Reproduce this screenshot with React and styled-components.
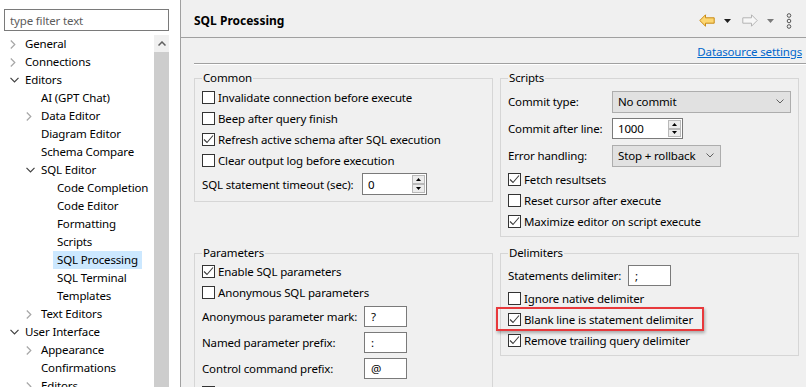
import React from "react";
import styled, { createGlobalStyle } from "styled-components";

const GlobalStyle = createGlobalStyle`
  html, body {
    margin: 0;
    padding: 0;
    background: #f0f0f0;
  }
  * {
    box-sizing: border-box;
  }
`;

const tree = [
  { label: "General", level: 0, state: "closed" },
  { label: "Connections", level: 0, state: "closed" },
  { label: "Editors", level: 0, state: "open" },
  { label: "AI (GPT Chat)", level: 1 },
  { label: "Data Editor", level: 1, state: "closed" },
  { label: "Diagram Editor", level: 1 },
  { label: "Schema Compare", level: 1 },
  { label: "SQL Editor", level: 1, state: "open" },
  { label: "Code Completion", level: 2 },
  { label: "Code Editor", level: 2 },
  { label: "Formatting", level: 2 },
  { label: "Scripts", level: 2 },
  { label: "SQL Processing", level: 2, selected: true },
  { label: "SQL Terminal", level: 2 },
  { label: "Templates", level: 2 },
  { label: "Text Editors", level: 1, state: "closed" },
  { label: "User Interface", level: 0, state: "open" },
  { label: "Appearance", level: 1, state: "closed" },
  { label: "Confirmations", level: 1 },
  { label: "Editors", level: 1, state: "closed" },
];

// small drawings

const Chevron = ({ open }) =>
  open ? (
    <svg width="9" height="6" viewBox="0 0 9 6">
      <polyline points="0.5,0.8 4.5,4.8 8.5,0.8" fill="none" stroke="#404040" strokeWidth="1.2" />
    </svg>
  ) : (
    <svg width="6" height="9" viewBox="0 0 6 9">
      <polyline points="0.8,0.5 4.8,4.5 0.8,8.5" fill="none" stroke="#a6a6a6" strokeWidth="1.2" />
    </svg>
  );

const CheckMark = () => (
  <svg width="11" height="11" viewBox="0 0 11 11">
    <polyline points="1,5.5 4,8.5 10,1.5" fill="none" stroke="#3c3c3c" strokeWidth="1.1" />
  </svg>
);

const ComboArrow = () => (
  <svg width="8" height="5" viewBox="0 0 8 5">
    <polyline points="0.5,0.5 4,4 7.5,0.5" fill="none" stroke="#606060" strokeWidth="1" />
  </svg>
);

const SpinTriangle = ({ down }) => (
  <svg width="5" height="3" viewBox="0 0 5 3">
    <polygon points={down ? "0,0 5,0 2.5,3" : "0,3 5,3 2.5,0"} fill="#000" />
  </svg>
);

const ArrowIcon = ({ back }) => (
  <svg width="16" height="13" viewBox="0 0 16 13">
    <path
      d={
        back
          ? "M0.8 6.5 L6.5 0.8 L6.5 3.8 L15.2 3.8 L15.2 9.2 L6.5 9.2 L6.5 12.2 Z"
          : "M15.2 6.5 L9.5 0.8 L9.5 3.8 L0.8 3.8 L0.8 9.2 L9.5 9.2 L9.5 12.2 Z"
      }
      fill={back ? "#fcd671" : "#f7f7f7"}
      stroke={back ? "#c98a14" : "#b4b4b4"}
      strokeWidth="1"
      strokeLinejoin="round"
    />
  </svg>
);

const DropTriangle = ({ color }) => (
  <svg width="7" height="4" viewBox="0 0 7 4">
    <polygon points="0,0 7,0 3.5,4" fill={color} />
  </svg>
);

const MoreIcon = () => (
  <svg width="6" height="16" viewBox="0 0 6 16">
    <circle cx="3" cy="2.5" r="1.8" fill="none" stroke="#555" strokeWidth="1" />
    <circle cx="3" cy="8" r="1.8" fill="none" stroke="#555" strokeWidth="1" />
    <circle cx="3" cy="13.5" r="1.8" fill="none" stroke="#555" strokeWidth="1" />
  </svg>
);

const ScrollUp = () => (
  <svg width="8" height="5" viewBox="0 0 8 5">
    <polyline points="0.5,4.5 4,1 7.5,4.5" fill="none" stroke="#606060" strokeWidth="1.5" />
  </svg>
);

// pieces

const Checkbox = ({ checked }) => <CheckBoxBox>{checked && <CheckMark />}</CheckBoxBox>;

const CheckOption = ({ checked, children, highlight }) => {
  const Row = highlight ? HighlightRow : CheckRow;
  return (
    <Row>
      <Checkbox checked={checked} />
      <span>{children}</span>
    </Row>
  );
};

const Spinner = ({ value, width, height }) => (
  <SpinBox $width={width} $height={height}>
    <span>{value}</span>
    <SpinButtons>
      <SpinButton>
        <SpinTriangle />
      </SpinButton>
      <SpinButton>
        <SpinTriangle down />
      </SpinButton>
    </SpinButtons>
  </SpinBox>
);

const Combo = ({ value, width }) => (
  <ComboBox $width={width}>
    <span>{value}</span>
    <ComboArrow />
  </ComboBox>
);

const App = () => {
  return (
    <Page>
      <GlobalStyle />
      <Sidebar>
        <FilterInput placeholder="type filter text" />
        <TreeArea>
          <TreeList>
            {tree.map((item, i) => (
              <TreeRow key={i} $level={item.level}>
                <ChevronBox>{item.state && <Chevron open={item.state === "open"} />}</ChevronBox>
                <TreeLabel $selected={item.selected}>{item.label}</TreeLabel>
              </TreeRow>
            ))}
          </TreeList>
          <ScrollBar>
            <ScrollArrow>
              <ScrollUp />
            </ScrollArrow>
            <ScrollThumb />
          </ScrollBar>
        </TreeArea>
      </Sidebar>

      <Main>
        <Header>
          <Title>SQL Processing</Title>
          <Toolbar>
            <ArrowIcon back />
            <DropTriangle color="#1e1e1e" />
            <ArrowIcon />
            <DropTriangle color="#7a7a7a" />
            <MoreIcon />
          </Toolbar>
        </Header>

        <LinkRow>
          <Link href="#">Datasource settings</Link>
        </LinkRow>
        <Separator />

        <Content>
          <Group $pt={1}>
            <Legend>Common</Legend>
            <CheckOption>Invalidate connection before execute</CheckOption>
            <CheckOption>Beep after query finish</CheckOption>
            <CheckOption checked>Refresh active schema after SQL execution</CheckOption>
            <CheckOption>Clear output log before execution</CheckOption>
            <FormRow>
              <FieldLabel $width={160}>SQL statement timeout (sec):</FieldLabel>
              <Spinner value="0" width={65} height={22} />
            </FormRow>
          </Group>

          <Group $pt={2}>
            <Legend>Scripts</Legend>
            <FormRow $h={27}>
              <FieldLabel $width={104}>Commit type:</FieldLabel>
              <Combo value="No commit" width={181} />
            </FormRow>
            <FormRow $h={27}>
              <FieldLabel $width={104}>Commit after line:</FieldLabel>
              <Spinner value="1000" width={71} height={21} />
            </FormRow>
            <FormRow $h={27}>
              <FieldLabel $width={104}>Error handling:</FieldLabel>
              <Combo value="Stop + rollback" width={109} />
            </FormRow>
            <CheckOption checked>Fetch resultsets</CheckOption>
            <CheckOption>Reset cursor after execute</CheckOption>
            <CheckOption checked>Maximize editor on script execute</CheckOption>
          </Group>

          <Group $pt={0}>
            <Legend>Parameters</Legend>
            <CheckOption checked>Enable SQL parameters</CheckOption>
            <CheckOption>Anonymous SQL parameters</CheckOption>
            <FormRow>
              <FieldLabel $width={162}>Anonymous parameter mark:</FieldLabel>
              <TextField>?</TextField>
            </FormRow>
            <FormRow>
              <FieldLabel $width={162}>Named parameter prefix:</FieldLabel>
              <TextField>:</TextField>
            </FormRow>
            <FormRow>
              <FieldLabel $width={162}>Control command prefix:</FieldLabel>
              <TextField>@</TextField>
            </FormRow>
            <LastRow>
              <CheckOption>Enable parameters in DDL</CheckOption>
            </LastRow>
          </Group>

          <Group $pt={1}>
            <Legend>Delimiters</Legend>
            <FormRow>
              <FieldLabel $width={120}>Statements delimiter:</FieldLabel>
              <TextField>;</TextField>
            </FormRow>
            <CheckOption>Ignore native delimiter</CheckOption>
            <CheckOption checked highlight>
              Blank line is statement delimiter
            </CheckOption>
            <CheckOption checked>Remove trailing query delimiter</CheckOption>
          </Group>
        </Content>
      </Main>
    </Page>
  );
};

const Page = styled.div`
  display: flex;
  width: 806px;
  height: 387px;
  overflow: hidden;
  font-family: "Segoe UI", "Noto Sans", sans-serif;
  font-size: 11.5px;
  letter-spacing: -0.15px;
  color: #000;
`;

// sidebar

const Sidebar = styled.aside`
  width: 181px;
  flex: none;
  display: flex;
  flex-direction: column;
  background: #fff;
  border-right: 1px solid #a0a0a0;
  padding: 9px 11px 0 4px;
`;

const FilterInput = styled.input`
  height: 22px;
  width: 100%;
  border: 1px solid #7a7a7a;
  padding: 0 5px;
  font: inherit;
  letter-spacing: inherit;
  outline: none;

  &::placeholder {
    color: #5c5c5c;
  }
`;

const TreeArea = styled.div`
  display: flex;
  flex: 1;
  min-height: 0;
  margin-top: 4px;
`;

const TreeList = styled.div`
  flex: 1;
  min-width: 0;
`;

const TreeRow = styled.div`
  display: flex;
  align-items: center;
  height: 18px;
  padding-left: ${({ $level }) => $level * 16}px;
  white-space: nowrap;
`;

const ChevronBox = styled.span`
  display: flex;
  align-items: center;
  width: 21px;
  flex: none;
  padding-left: 6px;
`;

const TreeLabel = styled.span`
  line-height: 18px;
  padding: 0 4px;
  margin-left: -4px;
  background: ${({ $selected }) => ($selected ? "#cce8ff" : "transparent")};
`;

const ScrollBar = styled.div`
  width: 15px;
  flex: none;
  display: flex;
  flex-direction: column;
  background: #f0f0f0;
`;

const ScrollArrow = styled.div`
  height: 17px;
  display: flex;
  align-items: center;
  justify-content: center;
`;

const ScrollThumb = styled.div`
  flex: 1;
  background: #cdcdcd;
`;

// main

const Main = styled.main`
  flex: 1;
  min-width: 0;
  display: flex;
  flex-direction: column;
  background: #f0f0f0;
`;

const Header = styled.header`
  height: 38px;
  flex: none;
  display: flex;
  align-items: center;
  justify-content: space-between;
  padding: 4px 14px 0 13px;
  border-bottom: 1px solid #a0a0a0;
`;

const Title = styled.h1`
  margin: 0;
  font-size: 12px;
  letter-spacing: 0;
  font-weight: 700;
`;

const Toolbar = styled.div`
  display: flex;
  align-items: center;
  gap: 9px;

  & > svg:nth-child(3) {
    margin-left: 2px;
  }
  & > svg:last-child {
    margin-left: 3px;
  }
`;

const LinkRow = styled.div`
  height: 25px;
  flex: none;
  display: flex;
  justify-content: flex-end;
  align-items: center;
  padding: 2px 4px 0 0;
`;

const Link = styled.a`
  color: #0066cc;
  text-decoration: underline;
`;

const Separator = styled.div`
  flex: none;
  margin-left: 13px;
  border-top: 1px solid #a0a0a0;
  border-bottom: 1px solid #fff;
`;

const Content = styled.div`
  display: grid;
  grid-template-columns: 1fr 1fr;
  column-gap: 7px;
  row-gap: 8px;
  align-items: start;
  padding: 5px 7px 0 13px;
`;

const Group = styled.fieldset`
  margin: 0;
  min-width: 0;
  border: 1px solid #d6d6d6;
  padding: ${({ $pt }) => $pt}px 7px 4px;
`;

const Legend = styled.legend`
  padding: 0 1px;
  line-height: 16px;
`;

const CheckRow = styled.div`
  display: flex;
  align-items: center;
  gap: 3px;
  height: 21px;
  white-space: nowrap;
`;

const LastRow = styled.div`
  padding-top: 1px;
`;

const HighlightRow = styled(CheckRow)`
  position: relative;
  width: fit-content;

  &::after {
    content: "";
    position: absolute;
    left: -12px;
    right: -11px;
    top: -2px;
    bottom: -1px;
    border: 2px solid #e8393c;
    box-shadow: 1px 2px 3px rgba(0, 0, 0, 0.3);
    pointer-events: none;
  }
`;

const CheckBoxBox = styled.span`
  width: 13px;
  height: 13px;
  flex: none;
  display: flex;
  align-items: center;
  justify-content: center;
  border: 1px solid #333;
  background: #fff;
`;

const FormRow = styled.div`
  display: flex;
  align-items: center;
  height: ${({ $h }) => $h || 26}px;
  white-space: nowrap;
`;

const FieldLabel = styled.span`
  width: ${({ $width }) => $width}px;
  flex: none;
`;

const TextField = styled.div`
  width: 43px;
  height: 21px;
  display: flex;
  align-items: center;
  padding-left: 6px;
  border: 1px solid #7a7a7a;
  background: #fff;
`;

const SpinBox = styled.div`
  width: ${({ $width }) => $width}px;
  height: ${({ $height }) => $height}px;
  display: flex;
  align-items: center;
  justify-content: space-between;
  padding: 1px 1px 1px 5px;
  border: 1px solid #7a7a7a;
  background: #fff;
`;

const SpinButtons = styled.div`
  display: flex;
  flex-direction: column;
  height: 100%;
  width: 13px;
`;

const SpinButton = styled.div`
  flex: 1;
  display: flex;
  align-items: center;
  justify-content: center;
  border: 1px solid #b9b9b9;
  background: #ececec;
`;

const ComboBox = styled.div`
  width: ${({ $width }) => $width}px;
  height: 22px;
  display: flex;
  align-items: center;
  justify-content: space-between;
  padding: 0 6px 0 5px;
  border: 1px solid #adadad;
  background: #e1e1e1;
`;

export default App;
